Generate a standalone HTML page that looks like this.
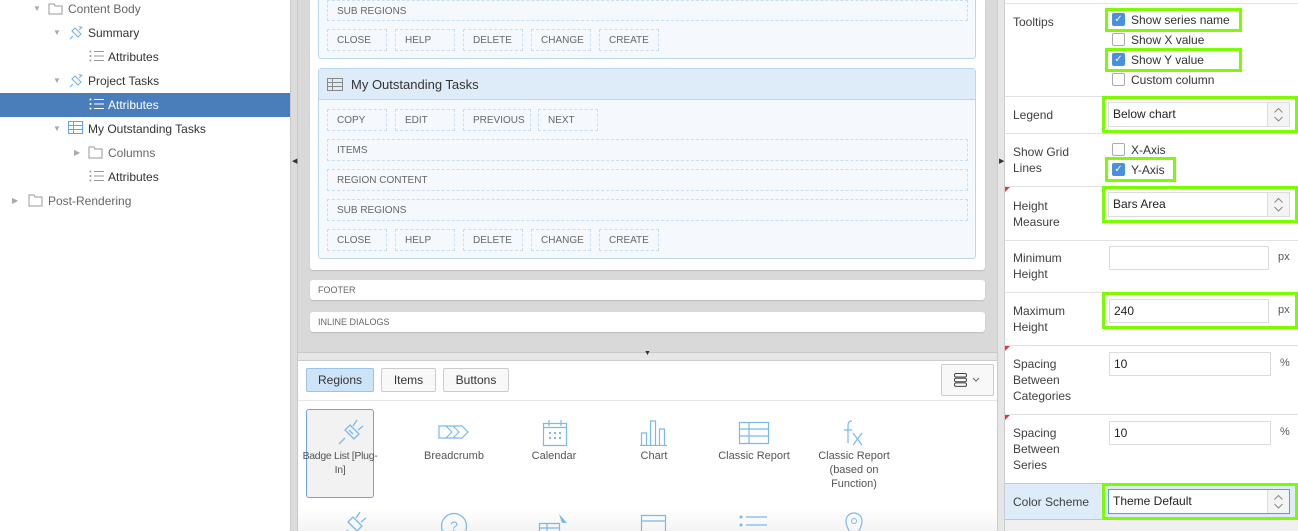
<!DOCTYPE html>
<html><head><meta charset="utf-8"><style>
*{box-sizing:border-box;margin:0;padding:0}
body{width:1298px;height:531px;overflow:hidden;font-family:"Liberation Sans",sans-serif;font-size:12px;color:#404040;background:#fff;position:relative}
.abs{position:absolute}
.tree div.r{position:absolute;left:0;width:290px;height:24px;line-height:24px;font-size:12px;color:#333}
.tri{position:absolute;font-size:8px;color:#aaa}
.dash{position:absolute;border:1px dashed #c8def2;font-size:10px;color:#666;line-height:21px;padding-left:9px;height:22px}
.lab{position:absolute;left:1013px;font-size:12px;color:#404040;line-height:16px}
.sep{position:absolute;left:1005px;width:293px;height:1px;background:#e2e2e2}
.inp{position:absolute;border:1px solid #dcdcdc;background:#fff;height:24px;line-height:23px;padding-left:4px;font-size:12px;color:#222}
.sel .arr{position:absolute;right:0;top:0;width:22px;height:100%;border-left:1px solid #dcdcdc;background:#f4f4f4}
.hl{position:absolute;border:3px solid #7cfc00}
.cb{position:absolute;width:13px;height:13px;border:1px solid #aaa;border-radius:2px;background:#fff}
.cb.on{background:#4a90e2;border-color:#4a90e2;color:#fff;font-size:10px;line-height:12px;text-align:center}
.cbt{position:absolute;font-size:12px;color:#333}
.gi{position:absolute;width:100px;text-align:center;font-size:11px;color:#555;line-height:14px;white-space:nowrap}
</style></head><body>
<div class="tree">
<span class="tri" style="left:33px;top:4px">▼</span>
<svg class="abs" style="left:48px;top:3px" width="16" height="12"><path d="M1 1h5l1 2h7v8H1z" fill="none" stroke="#999"/></svg>
<div class="r" style="top:-3px;left:68px;color:#666">Content Body</div>
<span class="tri" style="left:53px;top:28px">▼</span>
<svg class="abs" style="left:68px;top:25px" width="16" height="16"><path d="M2 14l3-3M11 2l3 0M14 2l-3 3M4 6l6 6 3-3-6-6z" fill="none" stroke="#6ab0f0"/></svg>
<div class="r" style="top:21px;left:88px">Summary</div>
<svg class="abs" style="left:89px;top:50px" width="16" height="12"><g fill="#999"><circle cx="1.5" cy="1.5" r="1"/><circle cx="1.5" cy="6" r="1"/><circle cx="1.5" cy="10.5" r="1"/></g><path d="M5 1.5h10M5 6h10M5 10.5h10" stroke="#999"/></svg>
<div class="r" style="top:45px;left:108px">Attributes</div>
<span class="tri" style="left:53px;top:76px">▼</span>
<svg class="abs" style="left:68px;top:73px" width="16" height="16"><path d="M2 14l3-3M11 2l3 0M14 2l-3 3M4 6l6 6 3-3-6-6z" fill="none" stroke="#6ab0f0"/></svg>
<div class="r" style="top:69px;left:88px">Project Tasks</div>
<div class="abs" style="left:0;top:93px;width:290px;height:24px;background:#4a7ebb"></div>
<svg class="abs" style="left:89px;top:98px" width="16" height="12"><g fill="#fff"><circle cx="1.5" cy="1.5" r="1"/><circle cx="1.5" cy="6" r="1"/><circle cx="1.5" cy="10.5" r="1"/></g><path d="M5 1.5h10M5 6h10M5 10.5h10" stroke="#fff"/></svg>
<div class="r" style="top:93px;left:108px;color:#fff">Attributes</div>
<span class="tri" style="left:53px;top:124px">▼</span>
<svg class="abs" style="left:68px;top:121px" width="15" height="13"><path d="M.5.5h14v12H.5zM.5 4.5h14M.5 8.5h14M5.5 .5v12" fill="none" stroke="#5aa8ec"/></svg>
<div class="r" style="top:117px;left:88px">My Outstanding Tasks</div>
<span class="tri" style="left:74px;top:148px">▶</span>
<svg class="abs" style="left:88px;top:146px" width="16" height="13"><path d="M1 1h5l1 2h7v9H1z" fill="none" stroke="#999"/></svg>
<div class="r" style="top:141px;left:108px;color:#666">Columns</div>
<svg class="abs" style="left:89px;top:170px" width="16" height="12"><g fill="#999"><circle cx="1.5" cy="1.5" r="1"/><circle cx="1.5" cy="6" r="1"/><circle cx="1.5" cy="10.5" r="1"/></g><path d="M5 1.5h10M5 6h10M5 10.5h10" stroke="#999"/></svg>
<div class="r" style="top:165px;left:108px">Attributes</div>
<span class="tri" style="left:12px;top:196px">▶</span>
<svg class="abs" style="left:28px;top:194px" width="16" height="13"><path d="M1 1h5l1 2h7v9H1z" fill="none" stroke="#999"/></svg>
<div class="r" style="top:189px;left:48px;color:#666">Post-Rendering</div>
</div>
<div class="abs" style="left:290px;top:0;width:8px;height:531px;background:#dcdcdc;border-left:1px solid #c8c8c8;border-right:1px solid #c8c8c8"></div>
<div class="abs" style="left:292px;top:157px;font-size:7px;color:#333">◀</div>
<div class="abs" style="left:298px;top:0;width:699px;height:353px;background:#d9d9d9"></div>
<div class="abs" style="left:310px;top:0;width:675px;height:270px;background:#fff;border-radius:0 0 3px 3px;box-shadow:0 1px 1px #bbb"></div>
<div class="abs" style="left:318px;top:-5px;width:658px;height:64px;background:#f5f9fd;border:1px solid #b9d7f0;border-radius:3px"></div>
<div class="dash" style="left:327px;top:0;width:641px;height:21px">SUB REGIONS</div>
<div class="dash" style="left:327px;top:29px;width:60px">CLOSE</div>
<div class="dash" style="left:395px;top:29px;width:60px">HELP</div>
<div class="dash" style="left:463px;top:29px;width:60px">DELETE</div>
<div class="dash" style="left:531px;top:29px;width:60px">CHANGE</div>
<div class="dash" style="left:599px;top:29px;width:60px">CREATE</div>
<div class="abs" style="left:318px;top:68px;width:658px;height:191px;background:#f5f9fd;border:1px solid #b9d7f0;border-radius:3px"></div>
<div class="abs" style="left:319px;top:69px;width:656px;height:31px;background:#deecf9;border-bottom:1px solid #b9d7f0"></div>
<svg class="abs" style="left:327px;top:78px" width="16" height="13"><path d="M.5.5h15v12H.5zM.5 4.5h15M.5 8.5h15M5.5.5v12" fill="none" stroke="#888"/></svg>
<div class="abs" style="left:351px;top:77px;font-size:13px;color:#333">My Outstanding Tasks</div>
<div class="dash" style="left:327px;top:109px;width:60px">COPY</div>
<div class="dash" style="left:395px;top:109px;width:60px">EDIT</div>
<div class="dash" style="left:463px;top:109px;width:68px">PREVIOUS</div>
<div class="dash" style="left:538px;top:109px;width:60px">NEXT</div>
<div class="dash" style="left:327px;top:139px;width:641px">ITEMS</div>
<div class="dash" style="left:327px;top:169px;width:641px">REGION CONTENT</div>
<div class="dash" style="left:327px;top:199px;width:641px">SUB REGIONS</div>
<div class="dash" style="left:327px;top:229px;width:60px">CLOSE</div>
<div class="dash" style="left:395px;top:229px;width:60px">HELP</div>
<div class="dash" style="left:463px;top:229px;width:60px">DELETE</div>
<div class="dash" style="left:531px;top:229px;width:60px">CHANGE</div>
<div class="dash" style="left:599px;top:229px;width:60px">CREATE</div>
<div class="abs" style="left:310px;top:280px;width:675px;height:20px;background:#fff;border-radius:3px;box-shadow:0 1px 1px #bbb;font-size:9px;color:#666;line-height:21px;padding-left:8px">FOOTER</div>
<div class="abs" style="left:310px;top:312px;width:675px;height:20px;background:#fff;border-radius:3px;box-shadow:0 1px 1px #bbb;font-size:9px;color:#666;line-height:21px;padding-left:8px">INLINE DIALOGS</div>
<div class="abs" style="left:298px;top:352px;width:699px;height:9px;background:#e6e6e6;border-top:1px solid #c8c8c8;border-bottom:1px solid #ccc"></div>
<div class="abs" style="left:644px;top:350px;font-size:7px;color:#333">▼</div>
<div class="abs" style="left:306px;top:368px;width:68px;height:24px;background:#cde3f8;border:1px solid #9ec3e6;border-radius:2px;text-align:center;line-height:22px;color:#333">Regions</div>
<div class="abs" style="left:381px;top:368px;width:55px;height:24px;background:#f8f8f8;border:1px solid #ccc;border-radius:2px;text-align:center;line-height:22px;color:#333">Items</div>
<div class="abs" style="left:443px;top:368px;width:66px;height:24px;background:#f8f8f8;border:1px solid #ccc;border-radius:2px;text-align:center;line-height:22px;color:#333">Buttons</div>
<div class="abs" style="left:941px;top:364px;width:53px;height:32px;background:#f8f8f8;border:1px solid #ccc;border-radius:2px"></div>
<svg class="abs" style="left:953px;top:372px" width="30" height="16"><rect x="1.5" y="1.5" width="12" height="3.5" rx="1.5" fill="none" stroke="#444"/><rect x="1.5" y="6.2" width="12" height="3.5" rx="1.5" fill="none" stroke="#444"/><rect x="1.5" y="10.9" width="12" height="3.5" rx="1.5" fill="none" stroke="#444"/><path d="M20 6l3 3 3-3" fill="none" stroke="#666"/></svg>
<div class="abs" style="left:298px;top:400px;width:699px;height:1px;background:#e6e6e6"></div>
<div class="abs" style="left:306px;top:409px;width:68px;height:89px;background:#f2f2f2;border:1px solid #6aa7e0;border-radius:3px"></div>
<svg class="abs" style="left:337px;top:418px" width="28" height="28"><path d="M2 26l6-6M20 2l-4 6M26 8l-5 4M8 12l9 9 5-5-9-9z M12 12l4 4M11 15l3 3" fill="none" stroke="#7ab8f0" stroke-width="1.3"/></svg>
<div class="gi" style="left:290px;top:449px;font-size:10.5px;letter-spacing:-0.3px">Badge List [Plug-<br>In]</div>
<svg class="abs" style="left:438px;top:425px" width="32" height="14"><path d="M1 1h23l6 6-6 6H1z M8 1l6 6-6 6M15 1l6 6-6 6" fill="none" stroke="#7ab8f0" stroke-width="1.2"/></svg>
<div class="gi" style="left:404px;top:449px">Breadcrumb</div>
<svg class="abs" style="left:542px;top:419px" width="26" height="28"><path d="M1.5 4.5h23v22h-23zM1.5 8.5h23M7 1v6M19 1v6" fill="none" stroke="#7ab8f0" stroke-width="1.2"/><g fill="#7ab8f0"><rect x="7" y="13" width="2" height="2"/><rect x="12" y="13" width="2" height="2"/><rect x="17" y="13" width="2" height="2"/><rect x="7" y="18" width="2" height="2"/><rect x="12" y="18" width="2" height="2"/><rect x="17" y="18" width="2" height="2"/></g></svg>
<div class="gi" style="left:504px;top:449px">Calendar</div>
<svg class="abs" style="left:640px;top:420px" width="28" height="26"><path d="M1.5 25V13h5v12M10.5 25V1h5v24M19.5 25V9h5v16M0 25.5h27" fill="none" stroke="#7ab8f0" stroke-width="1.2"/></svg>
<div class="gi" style="left:604px;top:449px">Chart</div>
<svg class="abs" style="left:738px;top:421px" width="32" height="24"><path d="M1.5 1.5h29v21h-29zM1.5 8h29M1.5 15h29M11 1.5v21" fill="none" stroke="#7ab8f0" stroke-width="1.2"/></svg>
<div class="gi" style="left:704px;top:449px">Classic Report</div>
<svg class="abs" style="left:840px;top:419px" width="26" height="28"><path d="M12 2c-4 0-4 3-4 6v16M4 11h8M13 14l9 12M22 14l-9 12" fill="none" stroke="#7ab8f0" stroke-width="1.2"/></svg>
<div class="gi" style="left:804px;top:449px">Classic Report<br>(based on<br>Function)</div>
<div class="abs" style="left:298px;top:508px;width:699px;height:23px;background:linear-gradient(#fff,#f4f4f4)"></div>
<svg class="abs" style="left:340px;top:510px" width="28" height="21"><path d="M2 26l6-6M20 2l-4 6M26 8l-5 4M8 12l9 9 5-5-9-9z" fill="none" stroke="#7ab8f0" stroke-width="1.3"/></svg>
<svg class="abs" style="left:440px;top:512px" width="28" height="19"><circle cx="14" cy="14" r="12.5" fill="none" stroke="#7ab8f0" stroke-width="1.2"/><text x="14" y="19" font-size="14" text-anchor="middle" fill="#7ab8f0" font-family="Liberation Sans">?</text></svg>
<svg class="abs" style="left:538px;top:513px" width="32" height="18"><path d="M1.5 10.5h20v12h-20zM1.5 15h20M9 10.5v12" fill="none" stroke="#7ab8f0" stroke-width="1.2"/><path d="M21 1l8 9h-5z" fill="#7ab8f0"/></svg>
<svg class="abs" style="left:640px;top:514px" width="28" height="17"><path d="M1.5 1.5h24v20h-24zM1.5 7h24" fill="none" stroke="#7ab8f0" stroke-width="1.2"/></svg>
<svg class="abs" style="left:738px;top:514px" width="30" height="17"><g fill="#7ab8f0"><circle cx="3" cy="3" r="1.5"/><circle cx="3" cy="11" r="1.5"/></g><path d="M8 3h21M8 11h21" stroke="#7ab8f0" stroke-width="1.2"/></svg>
<svg class="abs" style="left:844px;top:512px" width="20" height="19"><path d="M10 27C5 19 2 14 2 9a8 8 0 0116 0c0 5-3 10-8 18z" fill="none" stroke="#7ab8f0" stroke-width="1.2"/><circle cx="10" cy="9" r="2.5" fill="none" stroke="#7ab8f0"/></svg>
<div class="abs" style="left:997px;top:0;width:8px;height:531px;background:#e6e6e6;border-left:1px solid #ccc;border-right:1px solid #ccc"></div>
<div class="abs" style="left:999px;top:157px;font-size:7px;color:#333">▶</div>
<div class="sep" style="top:3px"></div>
<div class="lab" style="top:14px">Tooltips</div>
<div class="hl" style="left:1105px;top:8px;width:137px;height:24px"></div>
<div class="cb on" style="left:1112px;top:13px">✓</div><div class="cbt" style="left:1131px;top:13px">Show series name</div>
<div class="cb" style="left:1112px;top:33px"></div><div class="cbt" style="left:1131px;top:33px">Show X value</div>
<div class="hl" style="left:1105px;top:48px;width:137px;height:24px"></div>
<div class="cb on" style="left:1112px;top:53px">✓</div><div class="cbt" style="left:1131px;top:53px">Show Y value</div>
<div class="cb" style="left:1112px;top:73px"></div><div class="cbt" style="left:1131px;top:73px">Custom column</div>
<div class="sep" style="top:96px"></div>
<div class="lab" style="top:107px">Legend</div>
<div class="hl" style="left:1102px;top:96px;width:196px;height:37px"></div>
<div class="inp sel" style="left:1108px;top:102px;width:182px;height:25px">Below chart<div class="arr"><svg width="21" height="23"><path d="M6.5 9.5l4-4 4 4M6.5 14l4 4 4-4" fill="none" stroke="#888"/></svg></div></div>
<div class="sep" style="top:133px"></div>
<div class="lab" style="top:144px">Show Grid<br>Lines</div>
<div class="cb" style="left:1112px;top:143px"></div><div class="cbt" style="left:1131px;top:143px">X-Axis</div>
<div class="hl" style="left:1105px;top:157px;width:71px;height:25px"></div>
<div class="cb on" style="left:1112px;top:163px">✓</div><div class="cbt" style="left:1131px;top:163px">Y-Axis</div>
<div class="sep" style="top:186px"></div>
<div class="abs" style="left:1005px;top:187px;width:0;height:0;border-top:5px solid #e33;border-right:5px solid transparent"></div>
<div class="lab" style="top:198px">Height<br>Measure</div>
<div class="hl" style="left:1102px;top:186px;width:196px;height:37px"></div>
<div class="inp sel" style="left:1108px;top:192px;width:182px;height:25px">Bars Area<div class="arr"><svg width="21" height="23"><path d="M6.5 9.5l4-4 4 4M6.5 14l4 4 4-4" fill="none" stroke="#888"/></svg></div></div>
<div class="sep" style="top:240px"></div>
<div class="lab" style="top:250px">Minimum<br>Height</div>
<div class="inp" style="left:1109px;top:246px;width:160px;height:24px"></div>
<div class="abs" style="left:1278px;top:251px;font-size:11px;color:#555">px</div>
<div class="sep" style="top:292px"></div>
<div class="lab" style="top:303px">Maximum<br>Height</div>
<div class="hl" style="left:1102px;top:292px;width:196px;height:37px"></div>
<div class="inp" style="left:1109px;top:299px;width:160px;height:24px">240</div>
<div class="abs" style="left:1278px;top:304px;font-size:11px;color:#555">px</div>
<div class="sep" style="top:345px"></div>
<div class="abs" style="left:1005px;top:346px;width:0;height:0;border-top:5px solid #e33;border-right:5px solid transparent"></div>
<div class="lab" style="top:356px">Spacing<br>Between<br>Categories</div>
<div class="inp" style="left:1109px;top:352px;width:162px;height:24px">10</div>
<div class="abs" style="left:1280px;top:357px;font-size:11px;color:#555">%</div>
<div class="sep" style="top:414px"></div>
<div class="abs" style="left:1005px;top:415px;width:0;height:0;border-top:5px solid #e33;border-right:5px solid transparent"></div>
<div class="lab" style="top:425px">Spacing<br>Between<br>Series</div>
<div class="inp" style="left:1109px;top:421px;width:162px;height:24px">10</div>
<div class="abs" style="left:1280px;top:426px;font-size:11px;color:#555">%</div>
<div class="abs" style="left:1005px;top:483px;width:293px;height:37px;background:#deecf9;border-top:1px solid #a9ccef;border-bottom:1px solid #a9ccef"></div>
<div class="lab" style="top:494px">Color Scheme</div>
<div class="hl" style="left:1102px;top:483px;width:196px;height:37px"></div>
<div class="inp sel" style="left:1108px;top:489px;width:182px;height:25px;border-color:#5b9be0">Theme Default<div class="arr"><svg width="21" height="23"><path d="M6.5 9.5l4-4 4 4M6.5 14l4 4 4-4" fill="none" stroke="#888"/></svg></div></div>
<div class="abs" style="left:1005px;top:520px;width:293px;height:11px;background:#f0f0f0"></div>
</body></html>
